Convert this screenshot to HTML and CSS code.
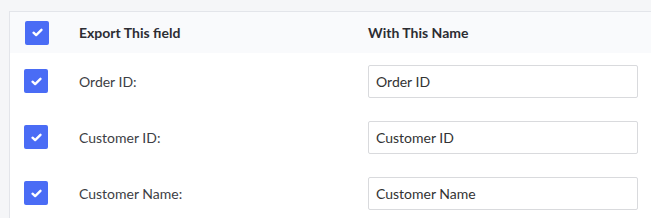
FILE: index.html
```html
<!DOCTYPE html>
<html>
<head>
    <title>Export Fields</title>
    <link rel="stylesheet" href="styles.css">
</head>
<body>

    <div class="exportTable">
        <div class="row head">
            <div class="cell"><span class="check"><svg viewBox="0 0 12 10" width="11" height="9"><path d="M1.6 5.2 L4.5 7.9 L10.4 2" fill="none" stroke="#fff" stroke-width="2.6" stroke-linecap="round" stroke-linejoin="round"/></svg></span></div>
            <div class="cell">Export This field</div>
            <div class="cell">With This Name</div>
        </div>
        <div class="row">
            <div class="cell"><span class="check"><svg viewBox="0 0 12 10" width="11" height="9"><path d="M1.6 5.2 L4.5 7.9 L10.4 2" fill="none" stroke="#fff" stroke-width="2.6" stroke-linecap="round" stroke-linejoin="round"/></svg></span></div>
            <div class="cell label">Order ID:</div>
            <div class="cell"><input class="nameInput" type="text" value="Order ID"></div>
        </div>
        <div class="row">
            <div class="cell"><span class="check"><svg viewBox="0 0 12 10" width="11" height="9"><path d="M1.6 5.2 L4.5 7.9 L10.4 2" fill="none" stroke="#fff" stroke-width="2.6" stroke-linecap="round" stroke-linejoin="round"/></svg></span></div>
            <div class="cell label">Customer ID:</div>
            <div class="cell"><input class="nameInput" type="text" value="Customer ID"></div>
        </div>
        <div class="row">
            <div class="cell"><span class="check"><svg viewBox="0 0 12 10" width="11" height="9"><path d="M1.6 5.2 L4.5 7.9 L10.4 2" fill="none" stroke="#fff" stroke-width="2.6" stroke-linecap="round" stroke-linejoin="round"/></svg></span></div>
            <div class="cell label">Customer Name:</div>
            <div class="cell"><input class="nameInput" type="text" value="Customer Name"></div>
        </div>
    </div>

</body>
</html>
```

FILE: styles.css
```css
body {
    font-family: "Lato", "Liberation Sans", sans-serif;
    background-color: #f5f6f8;
    margin: 0;
    padding: 11px 0 0 9px;
}

.exportTable {
    background-color: white;
    border-top: 1px solid #e3e5ea;
    border-left: 1px solid #e3e5ea;
}

.row {
    display: grid;
    grid-template-columns: 69px 289px 1fr;
    align-items: center;
    height: 56px;
}

.head {
    height: 41px;
    background-color: #f9fafc;
    font-weight: bold;
    font-size: 14px;
    color: #2c2d33;
}

.cell {
    display: flex;
    align-items: center;
}

.cell:first-child {
    padding-left: 14px;
}

.head .cell:first-child {
    padding-left: 15px;
}

.label {
    font-size: 14px;
    color: #3d3e44;
}

.check {
    width: 24px;
    height: 24px;
    border-radius: 2px;
    background-color: #4a6cf5;
    display: flex;
    align-items: center;
    justify-content: center;
}

.nameInput {
    box-sizing: border-box;
    width: 270px;
    height: 33px;
    border: 1px solid #d9dadd;
    border-radius: 2px;
    padding: 0 7px;
    font-family: inherit;
    font-size: 14px;
    color: #333;
    outline: none;
}
```
